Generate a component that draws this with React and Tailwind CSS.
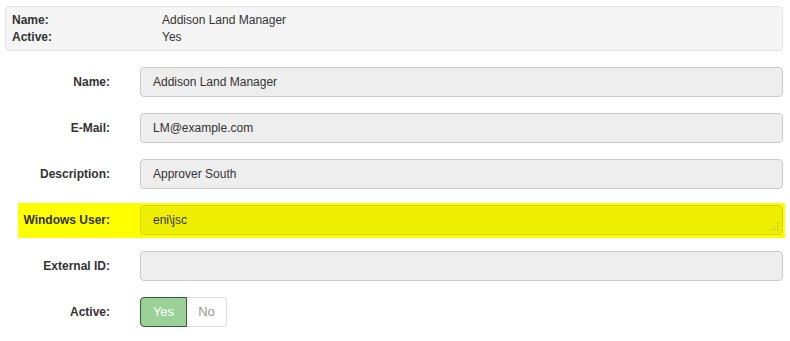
import React from "react";

const font = { fontFamily: '"Liberation Sans", Arial, sans-serif' };

function Row({ label, value, highlight }) {
  return (
    <div
      className={`flex items-center ml-[18px] w-[767px] h-[35px] pt-[2px] pb-[3px] ${
        highlight ? "bg-[#ffff00]" : ""
      }`}
    >
      <div className="w-[107px] pr-[15px] text-right text-[12px] font-bold text-[#333]">
        {label}
      </div>
      <div
        className={`relative ml-[15px] w-[643px] h-[30px] rounded-[4px] border flex items-center pl-[12px] text-[12px] ${
          highlight
            ? "bg-[#eeee00] border-[#d3d300] text-[#333]"
            : "bg-[#eeeeee] border-[#cccccc] text-[#333]"
        }`}
      >
        {value}
        {highlight && (
          <svg
            className="absolute right-[3px] bottom-[3px]"
            width="8"
            height="8"
            viewBox="0 0 8 8"
          >
            <rect x="6" y="0" width="1.2" height="1.2" fill="#b5b500" />
            <rect x="3" y="3" width="1.2" height="1.2" fill="#b5b500" />
            <rect x="6" y="3" width="1.2" height="1.2" fill="#b5b500" />
            <rect x="0" y="6" width="1.2" height="1.2" fill="#b5b500" />
            <rect x="3" y="6" width="1.2" height="1.2" fill="#b5b500" />
            <rect x="6" y="6" width="1.2" height="1.2" fill="#b5b500" />
          </svg>
        )}
      </div>
    </div>
  );
}

export default function App() {
  return (
    <div className="w-[790px] h-[341px] bg-white pt-[6px]" style={font}>
      <div className="ml-[5px] w-[778px] h-[45px] rounded-[4px] border border-[#e3e3e3] bg-[#f5f5f5] pt-[5px] pl-[6px] text-[12px] text-[#333] leading-[17px]">
        <div className="flex">
          <div className="w-[150px] font-bold">Name:</div>
          <div>Addison Land Manager</div>
        </div>
        <div className="flex">
          <div className="w-[150px] font-bold">Active:</div>
          <div>Yes</div>
        </div>
      </div>
      <div className="mt-[14px] flex flex-col gap-[11px]">
        <Row label="Name:" value="Addison Land Manager" />
        <Row label="E-Mail:" value="LM@example.com" />
        <Row label="Description:" value="Approver South" />
        <Row label="Windows User:" value="eni\jsc" highlight />
        <Row label="External ID:" value="" />
        <div className="flex items-center ml-[18px] w-[767px] h-[35px] pt-[2px] pb-[3px]">
          <div className="w-[107px] pr-[15px] text-right text-[12px] font-bold text-[#333]">
            Active:
          </div>
          <div className="ml-[15px] flex h-[30px] text-[13px]">
            <div className="w-[47px] h-full flex items-center justify-center rounded-l-[4px] border border-[#3e5a3e] bg-[#99d199] text-white">
              Yes
            </div>
            <div className="w-[40px] h-full flex items-center justify-center rounded-r-[4px] border border-l-0 border-[#dddddd] bg-white text-[#999]">
              No
            </div>
          </div>
        </div>
      </div>
    </div>
  );
}
